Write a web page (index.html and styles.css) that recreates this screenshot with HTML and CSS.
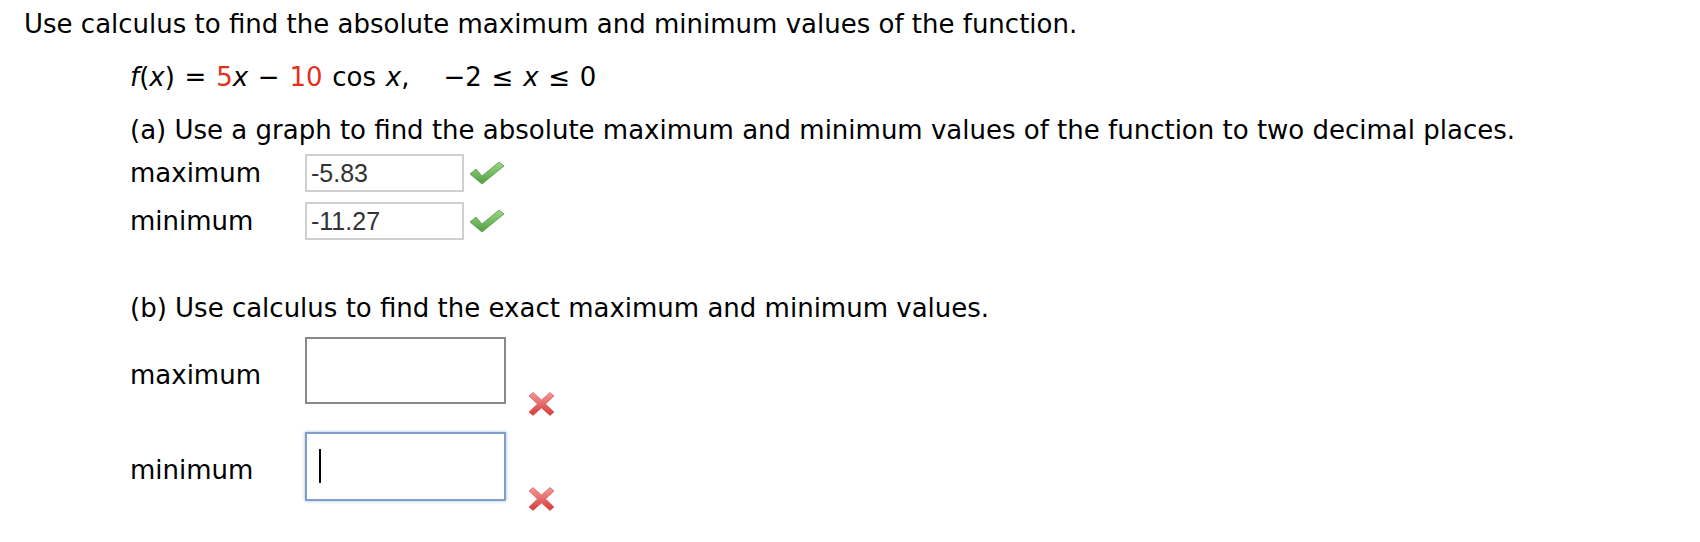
FILE: index.html
```html
<!DOCTYPE html>
<html>
<head>
<meta charset="utf-8">
<link rel="stylesheet" href="styles.css">
</head>
<body>
<div class="page">
  <p class="intro">Use calculus to find the absolute maximum and minimum values of the function.</p>
  <div class="body">
    <p class="fx"><i>f</i>(<i>x</i>) = <span class="red">5</span><i>x</i> &minus; <span class="red">10</span> cos <i>x</i>,<span class="gap"></span>&minus;2 &le; <i>x</i> &le; 0</p>
    <p class="part pa">(a) Use a graph to find the absolute maximum and minimum values of the function to two decimal places.</p>
    <div class="row row-a">
      <span class="label">maximum</span>
      <input class="box box-done" type="text" value="-5.83">
      <svg class="check" viewBox="0 0 38 24" width="38" height="24"><defs><linearGradient id="g1" x1="0" y1="0" x2="0" y2="1"><stop offset="0" stop-color="#9bd88a"/><stop offset="1" stop-color="#4f9e3f"/></linearGradient></defs><path d="M2 13 L8 8 L14 15 L31 1 L36 5 L14 23 Z" fill="url(#g1)" stroke="#5a9a48" stroke-width="0.8" stroke-linejoin="round"/></svg>
    </div>
    <div class="row row-a">
      <span class="label">minimum</span>
      <input class="box box-done" type="text" value="-11.27">
      <svg class="check" viewBox="0 0 38 24" width="38" height="24"><defs><linearGradient id="g2" x1="0" y1="0" x2="0" y2="1"><stop offset="0" stop-color="#9bd88a"/><stop offset="1" stop-color="#4f9e3f"/></linearGradient></defs><path d="M2 13 L8 8 L14 15 L31 1 L36 5 L14 23 Z" fill="url(#g2)" stroke="#5a9a48" stroke-width="0.8" stroke-linejoin="round"/></svg>
    </div>
    <p class="part pb">(b) Use calculus to find the exact maximum and minimum values.</p>
    <div class="row row-b">
      <span class="label">maximum</span>
      <input class="box box-open" type="text" value="">
      <svg class="cross" viewBox="0 0 27 24" width="27" height="24"><defs><linearGradient id="r1" x1="0" y1="0" x2="0" y2="1"><stop offset="0" stop-color="#f59a9a"/><stop offset="1" stop-color="#d63a3a"/></linearGradient></defs><path d="M1 4 L5 0.5 L13.5 8 L22 0.5 L26 4 L17.5 12 L26 20 L22 23.5 L13.5 16 L5 23.5 L1 20 L9.5 12 Z" fill="url(#r1)" stroke="#d04a4a" stroke-width="0.6" stroke-linejoin="round"/></svg>
    </div>
    <div class="row row-b">
      <span class="label">minimum</span>
      <span class="field">
        <input class="box box-open box-focus" type="text" value="">
        <span class="caret"></span>
      </span>
      <svg class="cross" viewBox="0 0 27 24" width="27" height="24"><defs><linearGradient id="r2" x1="0" y1="0" x2="0" y2="1"><stop offset="0" stop-color="#f59a9a"/><stop offset="1" stop-color="#d63a3a"/></linearGradient></defs><path d="M1 4 L5 0.5 L13.5 8 L22 0.5 L26 4 L17.5 12 L26 20 L22 23.5 L13.5 16 L5 23.5 L1 20 L9.5 12 Z" fill="url(#r2)" stroke="#d04a4a" stroke-width="0.6" stroke-linejoin="round"/></svg>
    </div>
  </div>
</div>
</body>
</html>
```

FILE: styles.css
```css
html, body {
  margin: 0;
  padding: 0;
  background: #ffffff;
}
.page {
  font-family: "DejaVu Sans", Verdana, sans-serif;
  font-size: 26px;
  color: #000;
  padding: 10px 0 0 24px;
}
p {
  margin: 0;
  line-height: 28px;
}
.body {
  margin-left: 106px;
}
.fx {
  margin-top: 25px;
  word-spacing: 1.5px;
}
.red {
  color: #e5301c;
}
.gap {
  display: inline-block;
  width: 34px;
}
.pa {
  margin-top: 25px;
}
.row {
  display: flex;
  align-items: center;
}
.row-a {
  margin-top: 10px;
}
.label {
  width: 175px;
  line-height: 28px;
}
.box {
  box-sizing: border-box;
  margin: 0;
  outline: none;
  font-family: "Liberation Sans", Arial, sans-serif;
  background: #fff;
}
.box-done {
  width: 159px;
  height: 38px;
  border: 2px solid #cfcfcf;
  font-size: 25px;
  color: #333;
  padding: 0 4px;
}
.check {
  margin-left: 4px;
}
.pb {
  margin-top: 54px;
}
.row-b {
  align-items: flex-start;
}
.pb + .row-b {
  margin-top: 15px;
}
.row-b + .row-b {
  margin-top: 16px;
}
.row-b .label {
  padding-top: 24px;
}
.box-open {
  width: 201px;
  height: 67px;
  border: 2px solid #888888;
  font-size: 25px;
}
.box-focus {
  height: 69px;
  border-color: #7f9fca;
  box-shadow: 0 0 3px rgba(90, 140, 210, 0.6);
}
.field {
  position: relative;
  display: block;
}
.caret {
  position: absolute;
  left: 14px;
  top: 17px;
  width: 2px;
  height: 34px;
  background: #000;
}
.cross {
  margin-left: 22px;
  margin-top: 55px;
}
```
